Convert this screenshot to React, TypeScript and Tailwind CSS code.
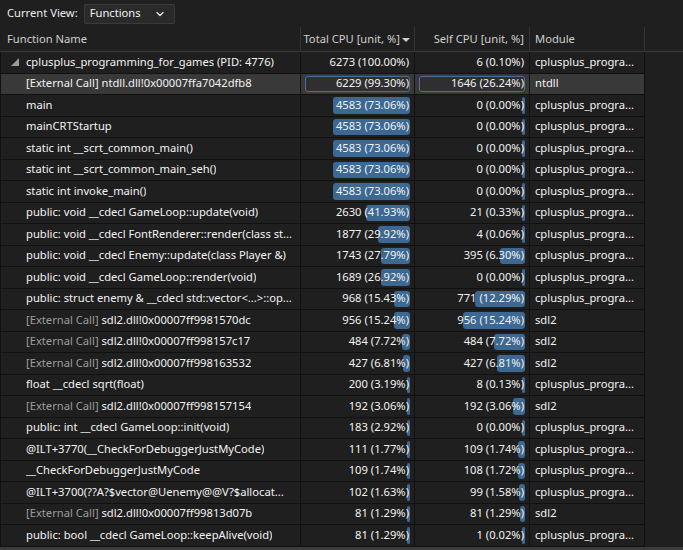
import { ChevronDown } from 'lucide-react';

type Row = {
  name: string;
  ext?: boolean;
  total: number;
  totalPct: number;
  self: number;
  selfPct: number;
  module: string;
  root?: boolean;
  selected?: boolean;
};

const CP = 'cplusplus_progra...';

const rows: Row[] = [
  { name: 'cplusplus_programming_for_games (PID: 4776)', total: 6273, totalPct: 100, self: 6, selfPct: 0.1, module: CP, root: true },
  { name: 'ntdll.dll!0x00007ffa7042dfb8', ext: true, total: 6229, totalPct: 99.3, self: 1646, selfPct: 26.24, module: 'ntdll', selected: true },
  { name: 'main', total: 4583, totalPct: 73.06, self: 0, selfPct: 0, module: CP },
  { name: 'mainCRTStartup', total: 4583, totalPct: 73.06, self: 0, selfPct: 0, module: CP },
  { name: 'static int __scrt_common_main()', total: 4583, totalPct: 73.06, self: 0, selfPct: 0, module: CP },
  { name: 'static int __scrt_common_main_seh()', total: 4583, totalPct: 73.06, self: 0, selfPct: 0, module: CP },
  { name: 'static int invoke_main()', total: 4583, totalPct: 73.06, self: 0, selfPct: 0, module: CP },
  { name: 'public: void __cdecl GameLoop::update(void)', total: 2630, totalPct: 41.93, self: 21, selfPct: 0.33, module: CP },
  { name: 'public: void __cdecl FontRenderer::render(class st...', total: 1877, totalPct: 29.92, self: 4, selfPct: 0.06, module: CP },
  { name: 'public: void __cdecl Enemy::update(class Player &)', total: 1743, totalPct: 27.79, self: 395, selfPct: 6.3, module: CP },
  { name: 'public: void __cdecl GameLoop::render(void)', total: 1689, totalPct: 26.92, self: 0, selfPct: 0, module: CP },
  { name: 'public: struct enemy & __cdecl std::vector<...>::op...', total: 968, totalPct: 15.43, self: 771, selfPct: 12.29, module: CP },
  { name: 'sdl2.dll!0x00007ff9981570dc', ext: true, total: 956, totalPct: 15.24, self: 956, selfPct: 15.24, module: 'sdl2' },
  { name: 'sdl2.dll!0x00007ff998157c17', ext: true, total: 484, totalPct: 7.72, self: 484, selfPct: 7.72, module: 'sdl2' },
  { name: 'sdl2.dll!0x00007ff998163532', ext: true, total: 427, totalPct: 6.81, self: 427, selfPct: 6.81, module: 'sdl2' },
  { name: 'float __cdecl sqrt(float)', total: 200, totalPct: 3.19, self: 8, selfPct: 0.13, module: CP },
  { name: 'sdl2.dll!0x00007ff998157154', ext: true, total: 192, totalPct: 3.06, self: 192, selfPct: 3.06, module: 'sdl2' },
  { name: 'public: int __cdecl GameLoop::init(void)', total: 183, totalPct: 2.92, self: 0, selfPct: 0, module: CP },
  { name: '@ILT+3770(__CheckForDebuggerJustMyCode)', total: 111, totalPct: 1.77, self: 109, selfPct: 1.74, module: CP },
  { name: '__CheckForDebuggerJustMyCode', total: 109, totalPct: 1.74, self: 108, selfPct: 1.72, module: CP },
  { name: '@ILT+3700(??A?$vector@Uenemy@@V?$allocat...', total: 102, totalPct: 1.63, self: 99, selfPct: 1.58, module: CP },
  { name: 'sdl2.dll!0x00007ff99813d07b', ext: true, total: 81, totalPct: 1.29, self: 81, selfPct: 1.29, module: 'sdl2' },
  { name: 'public: bool __cdecl GameLoop::keepAlive(void)', total: 81, totalPct: 1.29, self: 1, selfPct: 0.02, module: CP },
];

const MAX_SELF = 26.24;
const BAR_MAX = 106;

const fmt = (n: number, pct: number) => `${n} (${pct.toFixed(2)}%)`;

function CpuCell({ value, pct, scale, selected, hideBar }: { value: number; pct: number; scale: number; selected?: boolean; hideBar?: boolean }) {
  const width = Math.max(3, Math.round((pct / scale) * BAR_MAX));
  return (
    <div className="relative flex items-center justify-end pr-[5px] border-r border-b border-[#111111]">
      {selected ? (
        <div className="absolute left-[4px] right-[4px] top-[2px] bottom-[2px] rounded-[3px] border border-[#4d6f93] bg-[#2f2f2f]" />
      ) : (
        !hideBar && (
          <div
            className="absolute right-[4px] top-[2px] bottom-[2px] rounded-[3px] bg-[#3c6892]"
            style={{ width }}
          />
        )
      )}
      <span className="relative whitespace-nowrap">{fmt(value, pct)}</span>
    </div>
  );
}

export default function App() {
  return (
    <div
      className="w-[683px] h-[550px] overflow-hidden bg-[#1f1f1f] text-[#f3f3f3] text-[11.2px] flex flex-col"
      style={{ fontFamily: '"Noto Sans", "Open Sans", sans-serif' }}
    >
      <div className="h-[27px] flex items-center pl-[7px] shrink-0">
        <span className="text-[#ececec]">Current View:</span>
        <div className="ml-[6px] w-[91px] h-[20px] flex items-center justify-between pl-[5px] pr-[8px] bg-[#2a2a2a] border border-[#3a3a3a] rounded-[2px]">
          <span>Functions</span>
          <ChevronDown className="w-[12px] h-[12px] text-[#e8e8e8]" strokeWidth={2.5} />
        </div>
      </div>

      <div className="h-[25px] shrink-0 grid grid-cols-[301px_114px_115px_115px_1fr] border-b border-[#3a3a3a] text-[#cfcfcf] whitespace-nowrap">
        <div className="flex items-center pl-[7px] border-r border-[#333333]">Function Name</div>
        <div className="flex items-center justify-end pr-[4px] gap-[2px] border-r border-[#333333]">
          <span>Total CPU [unit, %]</span>
          <svg width="8" height="6" viewBox="0 0 8 6" className="mt-[2px] shrink-0">
            <polygon points="0,1 8,1 4,5" fill="#cfcfcf" />
          </svg>
        </div>
        <div className="flex items-center justify-end pr-[5px] border-r border-[#333333]">Self CPU [unit, %]</div>
        <div className="flex items-center pl-[5px] border-r border-[#333333]">Module</div>
        <div />
      </div>

      <div className="flex-1 flex flex-col">
        {rows.map((r, i) => {
          const cellBg = r.selected ? 'bg-[#393939]' : '';
          return (
            <div key={i} className="h-[21.5px] grid grid-cols-[301px_114px_115px_115px_1fr]">
              <div className={`flex items-center border-r border-b border-l border-[#111111] ${cellBg}`}>
                <div className="w-[25px] flex justify-center pl-[2px] shrink-0">
                  {r.root && (
                    <svg width="8" height="8" viewBox="0 0 8 8">
                      <polygon points="8,0 8,8 0,8" fill="#9a9a9a" />
                    </svg>
                  )}
                </div>
                <span className="whitespace-nowrap overflow-hidden">
                  {r.ext && (
                    <span className={r.selected ? '' : 'text-[#9d9d9d]'}>[External Call] </span>
                  )}
                  {r.name}
                </span>
              </div>
              <div className={`grid ${cellBg}`}>
                <CpuCell value={r.total} pct={r.totalPct} scale={100} selected={r.selected} hideBar={r.root} />
              </div>
              <div className={`grid ${cellBg}`}>
                <CpuCell value={r.self} pct={r.selfPct} scale={MAX_SELF} selected={r.selected} hideBar={r.root} />
              </div>
              <div className={`flex items-center pl-[5px] border-r border-b border-[#111111] whitespace-nowrap overflow-hidden ${cellBg}`}>
                {r.module}
              </div>
              <div />
            </div>
          );
        })}
      </div>
      <div className="h-[3px] shrink-0 bg-[#3c3c3c]" />
    </div>
  );
}
